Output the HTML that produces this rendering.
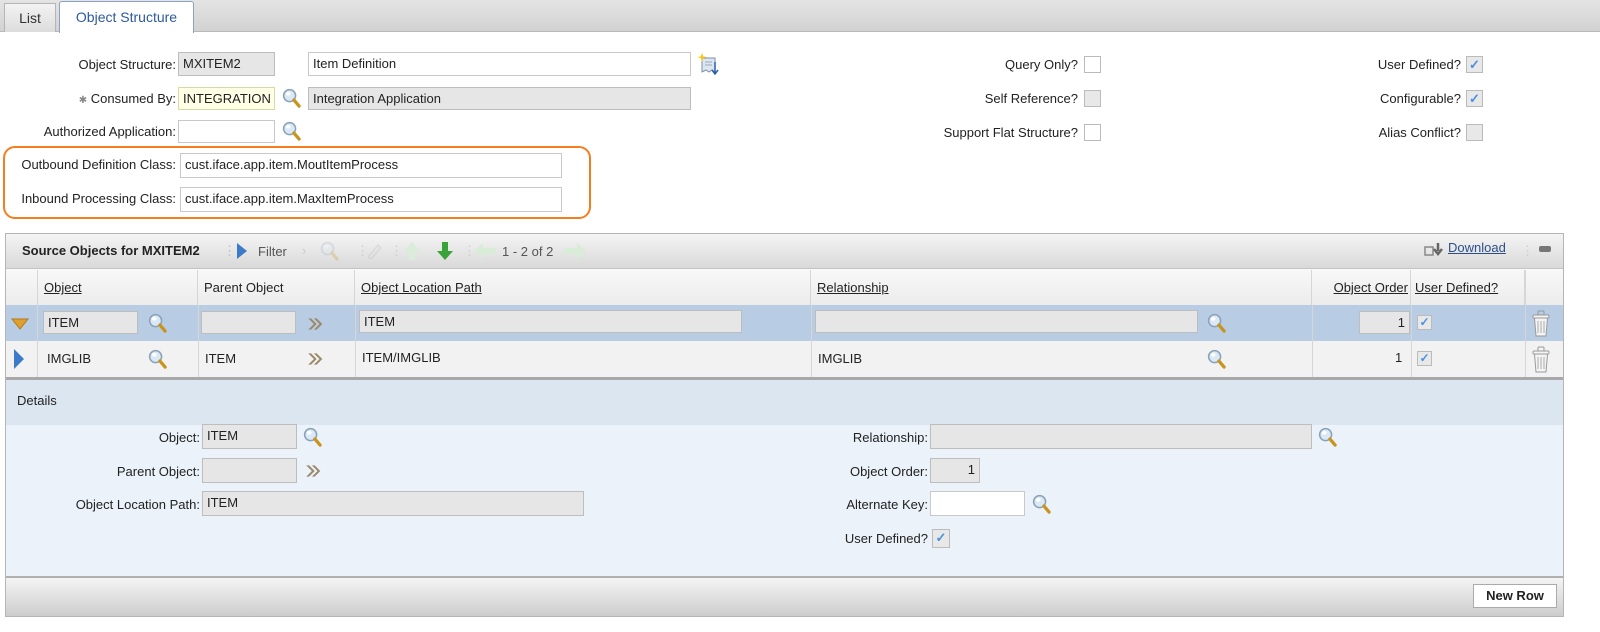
<!DOCTYPE html>
<html><head><meta charset="utf-8"><style>
*{box-sizing:border-box;margin:0;padding:0}
body{width:1600px;height:632px;background:#fff;font-family:"Liberation Sans",Arial,sans-serif;font-size:13px;color:#222;position:relative;overflow:hidden}
.a{position:absolute}
.lbl{position:absolute;text-align:right;white-space:nowrap;line-height:16px}
.in{position:absolute;border:1px solid #c9c9c9;background:#fff;padding:3px 4px;line-height:16px;white-space:nowrap;overflow:hidden;font-size:13px}
.ro{background:#e6e6e6;border-color:#bdbdbd}
.cb{position:absolute;width:17px;height:17px;border:1px solid #bbb;background:#fff}
.cb.dis{background:#e8e8e8}
.ck{color:#4a90e2;font-size:13px;line-height:15px;text-align:center;font-weight:bold}
.th{position:absolute;top:270px;height:35px;line-height:35px;padding-left:6px;border-right:1px solid #d6d6d6;text-decoration:underline}
.vl{position:absolute;width:1px;background:#d6d6d6}
u{text-decoration:underline}
</style></head><body>
<svg width="0" height="0" style="position:absolute"><defs>
<symbol id="mg" viewBox="0 0 20 22"><circle cx="8" cy="8" r="6.3" fill="#dbe9f6" stroke="#8aa2b8" stroke-width="1.6"/><ellipse cx="6.5" cy="6" rx="2.5" ry="2" fill="#fff"/><path d="M12.5 12.5 L18 19" stroke="#c8941e" stroke-width="3.4" stroke-linecap="round"/></symbol>
<symbol id="dd" viewBox="0 0 16 16"><path d="M2 3 L7 8 L2 13 L4.5 13 L9.5 8 L4.5 3Z M7 3 L12 8 L7 13 L9.5 13 L14.5 8 L9.5 3Z" fill="#9b8a6a"/></symbol>
<symbol id="tr" viewBox="0 0 22 30"><rect x="3" y="7" width="16" height="3" rx="1" fill="#f4f4f4" stroke="#999"/><rect x="8" y="3" width="6" height="4" rx="1" fill="none" stroke="#999"/><path d="M4.5 10 L6 28 L16 28 L17.5 10Z" fill="#f4f4f4" stroke="#999"/><path d="M8 13V25M11 13V25M14 13V25" stroke="#aaa"/></symbol>
</defs></svg>

<div class="a" style="left:0;top:0;width:1600px;height:32px;background:linear-gradient(#e4e4e4,#d2d2d2);border-bottom:1px solid #b9b9b9"></div>
<div class="a" style="left:4px;top:3px;width:52px;height:29px;background:linear-gradient(#f3f3f3,#dcdcdc);border:1px solid #b5b5b5;border-bottom:none;text-align:center;line-height:28px;font-size:14px;color:#333">List</div>
<div class="a" style="left:59px;top:1px;width:135px;height:32px;background:#fff;border:1px solid #8aa2c4;border-bottom:none;border-radius:3px 3px 0 0;text-align:center;line-height:30px;font-size:14px;color:#2c5a9c">Object Structure</div>

<div class="lbl" style="right:1424px;top:57px">Object Structure:</div>
<div class="in ro" style="left:178px;top:52px;width:97px;height:24px">MXITEM2</div>
<div class="in" style="left:308px;top:52px;width:383px;height:24px">Item Definition</div>
<svg class="a" style="left:697px;top:52px" width="22" height="24" viewBox="0 0 22 24"><path d="M5 6 H18 V20 L15 18 L12 20 L9 18 L5 20Z" fill="#dde6ef" stroke="#7a90a8"/><path d="M8 10H15M8 13H15" stroke="#9ab"/><path d="M18 10V21M15 18L18 22L21 18" stroke="#2a5db0" stroke-width="1.5" fill="none"/><path d="M5 1 L6.3 4.5 L10 5 L6.3 6 L5 10 L3.7 6 L0 5 L3.7 4.5Z" fill="#f5c518"/></svg>

<div class="lbl" style="right:1424px;top:91px"><span style="color:#888;font-size:10px">✱</span> Consumed By:</div>
<div class="in" style="left:178px;top:87px;width:97px;height:23px;background:#ffffe6;border-color:#d8d8a8">INTEGRATION</div>
<svg class="a" style="left:282px;top:88px" width="19" height="21"><use href="#mg"/></svg>
<div class="in ro" style="left:308px;top:87px;width:383px;height:23px">Integration Application</div>

<div class="lbl" style="right:1424px;top:124px">Authorized Application:</div>
<div class="in" style="left:178px;top:120px;width:97px;height:23px"></div>
<svg class="a" style="left:282px;top:121px" width="19" height="21"><use href="#mg"/></svg>

<div class="a" style="left:3px;top:146px;width:588px;height:73px;border:2px solid #f47d20;border-radius:12px"></div>
<div class="lbl" style="right:1424px;top:157px">Outbound Definition Class:</div>
<div class="in" style="left:180px;top:153px;width:382px;height:25px">cust.iface.app.item.MoutItemProcess</div>
<div class="lbl" style="right:1424px;top:191px">Inbound Processing Class:</div>
<div class="in" style="left:180px;top:187px;width:382px;height:25px">cust.iface.app.item.MaxItemProcess</div>

<div class="lbl" style="right:522px;top:57px">Query Only?</div><div class="cb" style="left:1084px;top:56px"></div>
<div class="lbl" style="right:522px;top:91px">Self Reference?</div><div class="cb dis" style="left:1084px;top:90px"></div>
<div class="lbl" style="right:522px;top:125px">Support Flat Structure?</div><div class="cb" style="left:1084px;top:124px"></div>
<div class="lbl" style="right:139px;top:57px">User Defined?</div><div class="cb dis ck" style="left:1466px;top:56px">✓</div>
<div class="lbl" style="right:139px;top:91px">Configurable?</div><div class="cb dis ck" style="left:1466px;top:90px">✓</div>
<div class="lbl" style="right:139px;top:125px">Alias Conflict?</div><div class="cb dis" style="left:1466px;top:124px"></div>

<div class="a" style="left:5px;top:233px;width:1559px;height:384px;border:1px solid #b5b5b5;background:#fff"></div>
<div class="a" style="left:6px;top:234px;width:1557px;height:35px;background:linear-gradient(#f4f4f4,#d9d9d9);border-bottom:1px solid #c4c4c4"></div>
<div class="a" style="left:22px;top:243px;font-weight:bold;line-height:16px">Source Objects for MXITEM2</div>
<div class="a" style="left:223px;top:243px;color:#bbb;line-height:16px">⋮</div>
<svg class="a" style="left:236px;top:242px" width="12" height="18"><path d="M1 1 L11 9 L1 17Z" fill="#3d7ac8"/></svg>
<div class="a" style="left:258px;top:244px;color:#555;line-height:16px">Filter</div>
<div class="a" style="left:302px;top:243px;color:#ccc;line-height:16px">›</div>
<svg class="a" style="left:320px;top:241px" width="19" height="21" opacity=".25"><use href="#mg"/></svg>
<div class="a" style="left:356px;top:243px;color:#ccc">⋮</div>
<svg class="a" style="left:364px;top:241px" width="20" height="20" opacity=".3"><path d="M4 16 L14 4 L17 7 L7 18Z" fill="#ddd" stroke="#aaa"/></svg>
<div class="a" style="left:390px;top:243px;color:#ccc">⋮</div>
<svg class="a" style="left:402px;top:240px" width="20" height="22"><path d="M10 2 L18 11 H13 V20 H7 V11 H2Z" fill="#d8ecd8"/></svg>
<svg class="a" style="left:435px;top:240px" width="20" height="22"><path d="M10 20 L18 11 H13 V2 H7 V11 H2Z" fill="#39a33a"/></svg>
<div class="a" style="left:463px;top:243px;color:#ccc">⋮</div>
<svg class="a" style="left:472px;top:242px" width="26" height="18"><path d="M2 9 L11 1 V6 H24 V12 H11 V17Z" fill="#d8ecd8"/></svg>
<div class="a" style="left:502px;top:244px;color:#555;line-height:16px">1 - 2 of 2</div>
<svg class="a" style="left:562px;top:242px" width="26" height="18"><path d="M24 9 L15 1 V6 H2 V12 H15 V17Z" fill="#d8ecd8"/></svg>

<svg class="a" style="left:1424px;top:242px" width="20" height="16"><rect x="1" y="5" width="8" height="8" fill="none" stroke="#888" stroke-width="1.5"/><path d="M14 1V9M10 7L14 12L18 7" stroke="#666" stroke-width="2.5" fill="none"/></svg>
<div class="a" style="left:1448px;top:240px;color:#2c4f8a;line-height:16px"><u>Download</u></div>
<div class="a" style="left:1521px;top:243px;color:#ccc">⋮</div>
<div class="a" style="left:1539px;top:246px;width:12px;height:6px;background:#777;border-radius:2px"></div>

<div class="a" style="left:6px;top:269px;width:1557px;height:36px;background:linear-gradient(#f8f8f8,#ececec)"></div>
<div class="th" style="left:37px;width:161px;border-left:1px solid #d6d6d6">Object</div>
<div class="th" style="left:198px;width:157px;text-decoration:none">Parent Object</div>
<div class="th" style="left:355px;width:456px">Object Location Path</div>
<div class="th" style="left:811px;width:501px">Relationship</div>
<div class="th" style="left:1312px;width:99px;text-align:right;padding-right:2px">Object Order</div>
<div class="th" style="left:1411px;width:114px;padding-left:4px">User Defined?</div>

<div class="a" style="left:6px;top:305px;width:1557px;height:36px;background:#b8cce4"></div>
<div class="a" style="left:6px;top:341px;width:1557px;height:36px;background:#f2f2f2"></div>
<div class="vl" style="left:37px;top:305px;height:72px"></div>
<div class="vl" style="left:198px;top:305px;height:72px"></div>
<div class="vl" style="left:355px;top:305px;height:72px"></div>
<div class="vl" style="left:811px;top:305px;height:72px"></div>
<div class="vl" style="left:1312px;top:305px;height:72px"></div>
<div class="vl" style="left:1411px;top:305px;height:72px"></div>
<div class="vl" style="left:1525px;top:270px;height:107px"></div>

<svg class="a" style="left:11px;top:318px" width="18" height="12"><path d="M1 1 H17 L9 11Z" fill="#e0a030" stroke="#b07a18"/></svg>
<div class="in ro" style="left:43px;top:311px;width:95px;height:23px">ITEM</div>
<svg class="a" style="left:148px;top:313px" width="19" height="21"><use href="#mg"/></svg>
<div class="in ro" style="left:201px;top:311px;width:95px;height:23px"></div>
<svg class="a" style="left:306px;top:315px" width="18" height="18"><use href="#dd"/></svg>
<div class="in ro" style="left:359px;top:310px;width:383px;height:23px">ITEM</div>
<div class="in ro" style="left:815px;top:310px;width:383px;height:23px"></div>
<svg class="a" style="left:1207px;top:313px" width="19" height="21"><use href="#mg"/></svg>
<div class="in ro" style="left:1359px;top:311px;width:51px;height:23px;text-align:right">1</div>
<div class="cb dis ck" style="left:1417px;top:315px;width:15px;height:15px;font-size:12px;line-height:13px">✓</div>
<svg class="a" style="left:1530px;top:308px" width="22" height="30"><use href="#tr"/></svg>

<svg class="a" style="left:13px;top:348px" width="12" height="22"><path d="M1 1 L11 11 L1 21Z" fill="#3d7ac8"/></svg>
<div class="a" style="left:47px;top:351px">IMGLIB</div>
<svg class="a" style="left:148px;top:349px" width="19" height="21"><use href="#mg"/></svg>
<div class="a" style="left:205px;top:351px">ITEM</div>
<svg class="a" style="left:306px;top:350px" width="18" height="18"><use href="#dd"/></svg>
<div class="a" style="left:362px;top:350px">ITEM/IMGLIB</div>
<div class="a" style="left:818px;top:351px">IMGLIB</div>
<svg class="a" style="left:1207px;top:349px" width="19" height="21"><use href="#mg"/></svg>
<div class="a" style="left:1395px;top:350px">1</div>
<div class="cb dis ck" style="left:1417px;top:351px;width:15px;height:15px;font-size:12px;line-height:13px">✓</div>
<svg class="a" style="left:1530px;top:344px" width="22" height="30"><use href="#tr"/></svg>

<div class="a" style="left:6px;top:377px;width:1557px;height:3px;background:#a8a8a8"></div>
<div class="a" style="left:6px;top:380px;width:1557px;height:45px;background:#dbe6f1"></div>
<div class="a" style="left:17px;top:393px">Details</div>
<div class="a" style="left:6px;top:425px;width:1557px;height:151px;background:#ebf2f9"></div>

<div class="lbl" style="right:1400px;top:430px">Object:</div>
<div class="in ro" style="left:202px;top:424px;width:95px;height:25px">ITEM</div>
<svg class="a" style="left:303px;top:427px" width="19" height="21"><use href="#mg"/></svg>
<div class="lbl" style="right:1400px;top:464px">Parent Object:</div>
<div class="in ro" style="left:202px;top:458px;width:95px;height:25px"></div>
<svg class="a" style="left:304px;top:462px" width="18" height="18"><use href="#dd"/></svg>
<div class="lbl" style="right:1400px;top:497px">Object Location Path:</div>
<div class="in ro" style="left:202px;top:491px;width:382px;height:25px">ITEM</div>

<div class="lbl" style="right:672px;top:430px">Relationship:</div>
<div class="in ro" style="left:930px;top:424px;width:382px;height:25px"></div>
<svg class="a" style="left:1318px;top:427px" width="19" height="21"><use href="#mg"/></svg>
<div class="lbl" style="right:672px;top:464px">Object Order:</div>
<div class="in ro" style="left:930px;top:458px;width:50px;height:25px;text-align:right">1</div>
<div class="lbl" style="right:672px;top:497px">Alternate Key:</div>
<div class="in" style="left:930px;top:491px;width:95px;height:25px"></div>
<svg class="a" style="left:1032px;top:494px" width="19" height="21"><use href="#mg"/></svg>
<div class="lbl" style="right:672px;top:531px">User Defined?</div>
<div class="cb dis ck" style="left:932px;top:529px;width:18px;height:19px">✓</div>

<div class="a" style="left:6px;top:576px;width:1557px;height:40px;background:linear-gradient(#f4f4f4,#cdcdcd);border-top:2px solid #b0b0b0"></div>
<div class="a" style="left:1473px;top:584px;width:84px;height:24px;background:#fff;border:1px solid #aaa;text-align:center;line-height:22px;font-weight:bold">New Row</div>
</body></html>
